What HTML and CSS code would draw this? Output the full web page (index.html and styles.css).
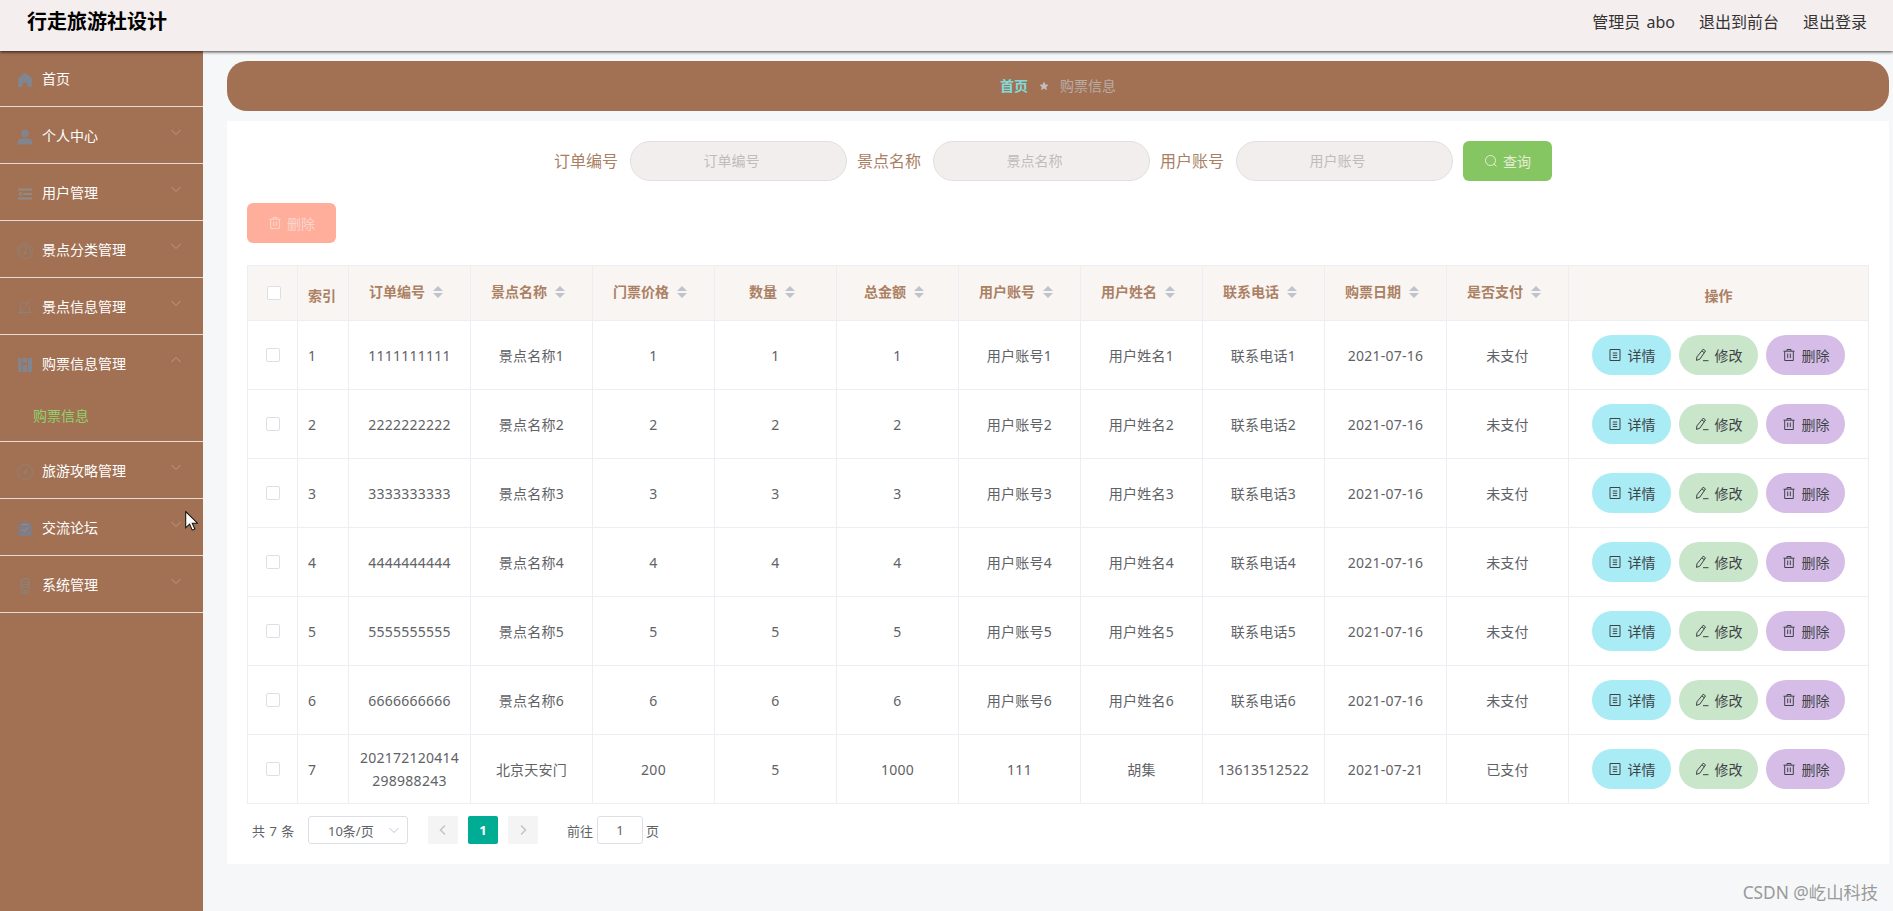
FILE: index.html
```html
<!DOCTYPE html>
<html lang="zh">
<head>
<meta charset="utf-8">
<title>行走旅游社设计</title>
<link rel="stylesheet" href="styles.css">
</head>
<body>
<svg class="defs" width="0" height="0">
  <symbol id="i-chev" viewBox="0 0 12 12"><path d="M1.5 4l4.5 4.5L10.500 4" fill="none" stroke="currentColor" stroke-width="1"/></symbol>
  <symbol id="i-up" viewBox="0 0 12 12"><path d="M1.500 8L6 3.500 10.500 8" fill="none" stroke="currentColor" stroke-width="1"/></symbol>
  <symbol id="i-tickets" viewBox="0 0 14 14"><path d="M2 1.500h10v11H2zM4.800 5h4.400M4.800 7.300h4.400M4.800 9.600h4.400" fill="none" stroke="currentColor" stroke-width="1"/></symbol>
  <symbol id="i-edit" viewBox="0 0 14 14"><path d="M8.200 1.200l2.300 1.700-5.700 8.300-3.300 1.200.4-3.500zM7 3l2.300 1.700M8 12.700h5.500" fill="none" stroke="currentColor" stroke-width="1"/></symbol>
  <symbol id="i-del" viewBox="0 0 14 14"><path d="M1.500 3.200h11M5 3V1.500h4V3M2.700 3.200v9.300h8.600V3.200M5.700 5.500v4.600M8.300 5.500v4.600" fill="none" stroke="currentColor" stroke-width="1"/></symbol>
  <symbol id="i-sort" viewBox="0 0 10 12"><path d="M5 0l5 5H0zM5 12L0 7h10z" fill="currentColor"/></symbol>
</svg>

<header class="topbar">
  <div class="brand">行走旅游社设计</div>
  <nav class="topnav">
    <span>管理员 abo</span><span>退出到前台</span><span>退出登录</span>
  </nav>
</header>

<div class="layout">
  <aside class="sidebar">
    <div class="menu-item first">
      <svg class="mi" viewBox="0 0 16 16"><path d="M8 1C5.500 2.100 2.400 4.300 1 7.100V15h4.800v-4.500h4.400V15H15V7.100C13.600 4.300 10.500 2.100 8 1z" fill="currentColor"/></svg>
      <span class="mt">首页</span>
    </div>
    <div class="menu-item">
      <svg class="mi" viewBox="0 0 16 16"><circle cx="8" cy="4.600" r="3.800" fill="currentColor"/><path d="M1 15.500v-2.800C1 10.500 3 9.500 5 9.500h6c2 0 4 1 4 3.200v2.800z" fill="currentColor"/></svg>
      <span class="mt">个人中心</span>
      <svg class="chev"><use href="#i-chev"/></svg>
    </div>
    <div class="menu-item">
      <svg class="mi mi-soft" viewBox="0 0 16 16"><path d="M1 2.500h14v2H1zM6 7h9v2H6zM1 11.500h14v2H1zM4.500 5.500v5L1 8z" fill="currentColor"/></svg>
      <span class="mt">用户管理</span>
      <svg class="chev"><use href="#i-chev"/></svg>
    </div>
    <div class="menu-item">
      <svg class="mi mi-line" viewBox="0 0 16 16"><circle cx="8" cy="8" r="7.500" fill="none" stroke="currentColor" stroke-width="1"/><path d="M3 10.500A5.500 5.500 0 1 1 13 10.500" fill="none" stroke="currentColor" stroke-width="1"/><path d="M10 4L8.300 9.800" stroke="currentColor" stroke-width="1.200"/><circle cx="7.800" cy="10.500" r="1.500" fill="currentColor"/></svg>
      <span class="mt">景点分类管理</span>
      <svg class="chev"><use href="#i-chev"/></svg>
    </div>
    <div class="menu-item">
      <svg class="mi mi-line" viewBox="0 0 16 16"><path d="M3.500 12.500V7C3.500 4.300 5.500 2.500 8 2.500c1.200 0 2.200.4 3 1.100M12.500 5.500v7M1 12.500h14M6.700 15h2.600M13 .5L2.500 14.500" fill="none" stroke="currentColor" stroke-width="1"/></svg>
      <span class="mt">景点信息管理</span>
      <svg class="chev"><use href="#i-chev"/></svg>
    </div>
    <div class="menu-item open">
      <svg class="mi" viewBox="0 0 16 16"><path d="M1 1h3.500v14H1zM5.500 1h4.500v5.500L7.800 5 5.500 6.500zM5.500 8h4.500v7H5.500zM11 1h4v14h-4z" fill="currentColor"/></svg>
      <span class="mt">购票信息管理</span>
      <svg class="chev"><use href="#i-up"/></svg>
    </div>
    <div class="submenu"><span>购票信息</span></div>
    <div class="menu-item">
      <svg class="mi mi-line" viewBox="0 0 16 16"><circle cx="8" cy="8" r="7.500" fill="none" stroke="currentColor" stroke-width="1"/><path d="M10.800 3.800L9.300 9.300 6.700 8.200z" fill="currentColor"/><circle cx="8" cy="8.800" r="1.500" fill="currentColor"/></svg>
      <span class="mt">旅游攻略管理</span>
      <svg class="chev"><use href="#i-chev"/></svg>
    </div>
    <div class="menu-item">
      <svg class="mi mi-clip" viewBox="0 0 16 16"><path d="M1.500 2.500H5V.8h6v1.700h3.500V15h-13z" fill="currentColor"/><path d="M4.800 8.200l2.400 2.400 4-4.200" fill="none" stroke="#a58d7f" stroke-width="1"/><path d="M5 3.500h6" stroke="#a58d7f" stroke-width=".8"/></svg>
      <span class="mt">交流论坛</span>
      <svg class="chev"><use href="#i-chev"/></svg>
    </div>
    <div class="menu-item">
      <svg class="mi mi-line" viewBox="0 0 16 16"><rect x="4" y=".8" width="8" height="11.200" rx="1.500" fill="none" stroke="currentColor" stroke-width="1.200"/><path d="M4 4h8M4 6.500h8M4 9h8M3 14h10M4.500 15.500h7M8 12v2" stroke="currentColor" stroke-width="1"/></svg>
      <span class="mt">系统管理</span>
      <svg class="chev"><use href="#i-chev"/></svg>
    </div>
  </aside>

  <main class="content">
    <div class="crumb">
      <span class="crumb-home">首页</span>
      <svg class="crumb-star" viewBox="0 0 12 12"><path d="M6 .5l1.700 3.600 3.800.4-2.800 2.600.8 3.900L6 9 2.500 11l.8-3.900L.5 4.500l3.800-.4z" fill="currentColor"/></svg>
      <span class="crumb-cur">购票信息</span>
    </div>

    <section class="card">
      <form class="search">
        <label>订单编号</label><div class="fake-input">订单编号</div>
        <label>景点名称</label><div class="fake-input">景点名称</div>
        <label>用户账号</label><div class="fake-input">用户账号</div>
        <button type="button" class="btn-query">
          <svg viewBox="0 0 14 14"><circle cx="6.500" cy="6.500" r="5" fill="none" stroke="currentColor" stroke-width="1"/><path d="M10 10l2.500 2.500" stroke="currentColor" stroke-width="1"/></svg>
          查询
        </button>
      </form>

      <div class="actions">
        <button type="button" class="btn-remove"><svg><use href="#i-del"/></svg>删除</button>
      </div>

      <table class="grid">
        <colgroup>
          <col class="c-check"><col class="c-index">
          <col class="c-data"><col class="c-data"><col class="c-data"><col class="c-data"><col class="c-data">
          <col class="c-data"><col class="c-data"><col class="c-data"><col class="c-data"><col class="c-data">
          <col class="c-ops">
        </colgroup>
        <thead>
          <tr>
            <th><span class="box head-box"></span></th>
            <th class="left idx">索引</th>
            <th><span class="th-in">订单编号<svg><use href="#i-sort"/></svg></span></th>
            <th><span class="th-in">景点名称<svg><use href="#i-sort"/></svg></span></th>
            <th><span class="th-in">门票价格<svg><use href="#i-sort"/></svg></span></th>
            <th><span class="th-in">数量<svg><use href="#i-sort"/></svg></span></th>
            <th><span class="th-in">总金额<svg><use href="#i-sort"/></svg></span></th>
            <th><span class="th-in">用户账号<svg><use href="#i-sort"/></svg></span></th>
            <th><span class="th-in">用户姓名<svg><use href="#i-sort"/></svg></span></th>
            <th><span class="th-in">联系电话<svg><use href="#i-sort"/></svg></span></th>
            <th><span class="th-in">购票日期<svg><use href="#i-sort"/></svg></span></th>
            <th><span class="th-in">是否支付<svg><use href="#i-sort"/></svg></span></th>
            <th class="idx">操作</th>
          </tr>
        </thead>
        <tbody>
          <tr><td><span class="box"></span></td><td class="left">1</td><td>1111111111</td><td>景点名称1</td><td>1</td><td>1</td><td>1</td><td>用户账号1</td><td>用户姓名1</td><td>联系电话1</td><td>2021-07-16</td><td>未支付</td>
            <td><div class="ops"><button type="button" class="op op-a"><svg><use href="#i-tickets"/></svg>详情</button><button type="button" class="op op-b"><svg><use href="#i-edit"/></svg>修改</button><button type="button" class="op op-c"><svg><use href="#i-del"/></svg>删除</button></div></td></tr>
          <tr><td><span class="box"></span></td><td class="left">2</td><td>2222222222</td><td>景点名称2</td><td>2</td><td>2</td><td>2</td><td>用户账号2</td><td>用户姓名2</td><td>联系电话2</td><td>2021-07-16</td><td>未支付</td>
            <td><div class="ops"><button type="button" class="op op-a"><svg><use href="#i-tickets"/></svg>详情</button><button type="button" class="op op-b"><svg><use href="#i-edit"/></svg>修改</button><button type="button" class="op op-c"><svg><use href="#i-del"/></svg>删除</button></div></td></tr>
          <tr><td><span class="box"></span></td><td class="left">3</td><td>3333333333</td><td>景点名称3</td><td>3</td><td>3</td><td>3</td><td>用户账号3</td><td>用户姓名3</td><td>联系电话3</td><td>2021-07-16</td><td>未支付</td>
            <td><div class="ops"><button type="button" class="op op-a"><svg><use href="#i-tickets"/></svg>详情</button><button type="button" class="op op-b"><svg><use href="#i-edit"/></svg>修改</button><button type="button" class="op op-c"><svg><use href="#i-del"/></svg>删除</button></div></td></tr>
          <tr><td><span class="box"></span></td><td class="left">4</td><td>4444444444</td><td>景点名称4</td><td>4</td><td>4</td><td>4</td><td>用户账号4</td><td>用户姓名4</td><td>联系电话4</td><td>2021-07-16</td><td>未支付</td>
            <td><div class="ops"><button type="button" class="op op-a"><svg><use href="#i-tickets"/></svg>详情</button><button type="button" class="op op-b"><svg><use href="#i-edit"/></svg>修改</button><button type="button" class="op op-c"><svg><use href="#i-del"/></svg>删除</button></div></td></tr>
          <tr><td><span class="box"></span></td><td class="left">5</td><td>5555555555</td><td>景点名称5</td><td>5</td><td>5</td><td>5</td><td>用户账号5</td><td>用户姓名5</td><td>联系电话5</td><td>2021-07-16</td><td>未支付</td>
            <td><div class="ops"><button type="button" class="op op-a"><svg><use href="#i-tickets"/></svg>详情</button><button type="button" class="op op-b"><svg><use href="#i-edit"/></svg>修改</button><button type="button" class="op op-c"><svg><use href="#i-del"/></svg>删除</button></div></td></tr>
          <tr><td><span class="box"></span></td><td class="left">6</td><td>6666666666</td><td>景点名称6</td><td>6</td><td>6</td><td>6</td><td>用户账号6</td><td>用户姓名6</td><td>联系电话6</td><td>2021-07-16</td><td>未支付</td>
            <td><div class="ops"><button type="button" class="op op-a"><svg><use href="#i-tickets"/></svg>详情</button><button type="button" class="op op-b"><svg><use href="#i-edit"/></svg>修改</button><button type="button" class="op op-c"><svg><use href="#i-del"/></svg>删除</button></div></td></tr>
          <tr><td><span class="box"></span></td><td class="left">7</td><td>202172120414<br>298988243</td><td>北京天安门</td><td>200</td><td>5</td><td>1000</td><td>111</td><td>胡集</td><td>13613512522</td><td>2021-07-21</td><td>已支付</td>
            <td><div class="ops"><button type="button" class="op op-a"><svg><use href="#i-tickets"/></svg>详情</button><button type="button" class="op op-b"><svg><use href="#i-edit"/></svg>修改</button><button type="button" class="op op-c"><svg><use href="#i-del"/></svg>删除</button></div></td></tr>
        </tbody>
      </table>

      <div class="pager">
        <span class="total">共 7 条</span>
        <div class="size">10条/页<svg><use href="#i-chev"/></svg></div>
        <div class="pages">
          <span class="pg"><svg viewBox="0 0 12 12"><path d="M8 1.500L3.500 6 8 10.500" fill="none" stroke="currentColor" stroke-width="1.500"/></svg></span>
          <span class="pg on">1</span>
          <span class="pg"><svg viewBox="0 0 12 12"><path d="M4 1.500L8.500 6 4 10.500" fill="none" stroke="currentColor" stroke-width="1.500"/></svg></span>
        </div>
        <span class="jump">前往</span><div class="jump-box">1</div><span class="jump-end">页</span>
      </div>
    </section>
  </main>
</div>

<div class="watermark">CSDN @屹山科技</div>
<svg class="cursor" viewBox="0 0 12 19"><path d="M.5.500v15.500l3.700-3.500 2.500 5.700 2.500-1.100-2.500-5.500h5z" fill="#fff" stroke="#111" stroke-width="1"/></svg>
</body>
</html>
```
FILE: styles.css
```css
* { box-sizing: border-box; }
html, body { margin: 0; padding: 0; height: 100%; overflow: hidden; }
body {
  position: relative;
  width: 1893px;
  height: 911px;
  background: #f6f7f9;
  font-family: "Noto Sans", "Noto Sans CJK SC", sans-serif;
  font-size: 14px;
  color: #606266;
}
.defs { position: absolute; }

.topbar {
  position: relative;
  z-index: 2;
  height: 51px;
  display: flex;
  align-items: center;
  justify-content: space-between;
  padding: 0 26px 8px 27px;
  background: #f4eeee;
  box-shadow: 0 1px 3px rgba(0,0,0,.75);
}
.brand { font-size: 20px; font-weight: 700; color: #000; line-height: 1; }
.topnav { display: flex; gap: 24px; font-size: 16px; color: #333; line-height: 1; word-spacing: 2px; }

.layout { display: flex; height: 860px; }
.sidebar { width: 203px; flex: none; background: #a27153; color: #fff; }
.menu-item {
  height: 57px;
  display: flex;
  align-items: center;
  padding: 0 22px 0 17px;
  border-bottom: 1px solid #e6dad2;
}
.menu-item.first { height: 56px; }
.menu-item.first .mt { padding-top: 0; }
.menu-item.open { border-bottom: 0; height: 56px; }
.mi { width: 16px; height: 16px; flex: none; color: #80858f; margin: 3px 9px 0 0; }
.mi-soft { color: #8f8a88; }
.mi-line { color: #8e8177; }
.mi-clip { color: #7f7d85; }
.mt { flex: 1; line-height: 20px; padding-top: 2px; }
.chev { width: 12px; height: 12px; flex: none; color: #b99c88; margin: -6px -1px 0 0; }
.submenu {
  height: 51px;
  padding: 0 0 2px 33px;
  display: flex;
  align-items: center;
  color: #8fd36c;
  border-bottom: 1px solid #e6dad2;
}

.content { flex: 1; padding: 10px 4px 0 24px; min-width: 0; }
.crumb {
  height: 50px;
  border-radius: 20px;
  background: #a27153;
  display: flex;
  align-items: center;
  justify-content: center;
  gap: 11px;
  line-height: 1;
}
.crumb-home { color: #7fdcdc; font-weight: 700; }
.crumb-star { width: 10px; height: 10px; color: #c4bdbd; }
.crumb-cur { color: #b9ada6; }

.card { margin-top: 10px; height: 743px; background: #fff; padding: 20px; }

.search { display: flex; justify-content: center; align-items: center; height: 40px; padding-right: 10px; }
.search label { font-size: 16px; color: #a98064; margin-right: 12px; line-height: 1; }
.fake-input {
  width: 217px;
  height: 40px;
  line-height: 38px;
  margin-right: 10px;
  padding-right: 14px;
  border: 1px solid #e3dfe0;
  border-radius: 20px;
  background: #f3eeee;
  color: #c0bcbc;
  text-align: center;
}
.btn-query {
  width: 89px;
  height: 40px;
  border: 0;
  border-radius: 6px;
  background: #85c662;
  color: #e6ecd6;
  font: inherit;
  display: flex;
  align-items: center;
  justify-content: center;
  gap: 5px;
}
.btn-query svg { width: 14px; height: 14px; }

.actions { margin-top: 22px; height: 40px; }
.btn-remove {
  width: 89px;
  height: 40px;
  border: 0;
  border-radius: 6px;
  background: #ffae9c;
  color: #fbd5cc;
  font: inherit;
  display: flex;
  align-items: center;
  justify-content: center;
  gap: 5px;
}
.btn-remove svg { width: 14px; height: 14px; }

.grid {
  margin-top: 22px;
  width: 1621px;
  table-layout: fixed;
  border-collapse: collapse;
  border: 1px solid #ebeef2;
  text-align: center;
}
.c-check { width: 50px; }
.c-index { width: 51px; }
.c-data { width: 122px; }
.c-ops { width: 300px; }
.grid th, .grid td { border: 1px solid #ebeef2; padding: 0 10px; }
.grid th { height: 55px; background: #f8f5f3; color: #ac8063; font-weight: 700; }
.grid td { height: 69px; line-height: 23px; letter-spacing: .25px; }
.grid .left { text-align: left; }
.grid th.idx { padding-top: 3px; }
.th-in { display: inline-flex; align-items: center; gap: 8px; line-height: 20px; position: relative; top: -1px; padding-right: 7px; }
.th-in svg { width: 10px; height: 12px; color: #bfc3cc; }
.box { display: block; width: 14px; height: 14px; margin: 0 auto; border: 1px solid #dcdfe6; border-radius: 2px; background: #fff; }
.head-box { margin-left: 9px; }

.ops { display: flex; justify-content: center; gap: 8px; }
.op {
  width: 79px;
  height: 40px;
  border: 0;
  border-radius: 20px;
  font: inherit;
  letter-spacing: 0;
  color: #3f4347;
  display: flex;
  align-items: center;
  justify-content: center;
  gap: 6px;
  padding: 0;
}
.op svg { width: 14px; height: 14px; }
.op-a { background: #a9ecf5; }
.op-b { background: #c9e5ca; }
.op-c { background: #d6bde8; }

.pager { display: flex; align-items: center; margin-top: 12px; height: 28px; font-size: 13px; padding-left: 5px; }
.total { width: 56px; flex: none; word-spacing: 1px; }
.size {
  width: 100px;
  height: 28px;
  flex: none;
  border: 1px solid #dcdfe6;
  border-radius: 3px;
  display: flex;
  align-items: center;
  justify-content: space-between;
  padding: 0 7px 0 19px;
  color: #606266;
}
.size svg { width: 12px; height: 12px; color: #c0c4cc; }
.pages { display: flex; gap: 10px; margin-left: 20px; }
.pg {
  width: 30px;
  height: 28px;
  border-radius: 2px;
  background: #f4f4f5;
  color: #c0c4cc;
  display: flex;
  align-items: center;
  justify-content: center;
}
.pg svg { width: 12px; height: 12px; }
.pg.on { background: #00ac94; color: #fff; font-weight: 700; }
.jump { margin-left: 29px; }
.jump-box {
  width: 46px;
  height: 28px;
  margin: 0 3px 0 4px;
  border: 1px solid #dcdfe6;
  border-radius: 3px;
  text-align: center;
  line-height: 26px;
}

.watermark {
  position: absolute;
  right: 15px;
  bottom: 6px;
  font-size: 17.3px;
  line-height: 24px;
  color: #9a9a9a;
  z-index: 3;
}
.cursor { position: absolute; left: 185px; top: 511px; width: 13px; height: 20px; z-index: 3; }
```
